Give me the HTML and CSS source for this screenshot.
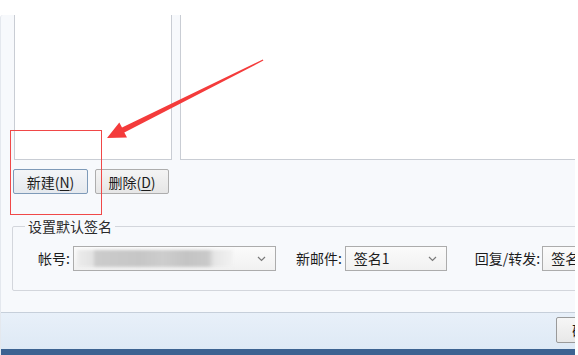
FILE: index.html
```html
<!DOCTYPE html>
<html lang="zh-CN">
<head>
<meta charset="utf-8">
<title>签名设置</title>
<link rel="stylesheet" href="styles.css">
</head>
<body>
<div class="stage">
  <div class="window">
    <div class="lists">
      <div class="list list-left"></div>
      <div class="list list-right"></div>
    </div>
    <div class="buttons">
      <button class="btn btn-default">新建(<u>N</u>)</button>
      <button class="btn btn-second">删除(<u>D</u>)</button>
    </div>
    <fieldset class="group">
      <legend class="group-title">设置默认签名</legend>
      <div class="group-row">
        <span class="label">帐号:</span>
        <div class="combo combo-account">
          <div class="blur"></div>
          <svg class="chev" width="9" height="6" viewBox="0 0 9 6"><path d="M1 1 L4.5 4.5 L8 1" fill="none" stroke="#7a7a7a" stroke-width="1.2"/></svg>
        </div>
        <span class="label label-new">新邮件:</span>
        <div class="combo combo-new">
          <span class="combo-text">签名1</span>
          <svg class="chev" width="9" height="6" viewBox="0 0 9 6"><path d="M1 1 L4.5 4.5 L8 1" fill="none" stroke="#7a7a7a" stroke-width="1.2"/></svg>
        </div>
        <span class="label label-reply">回复/转发:</span>
        <div class="combo combo-reply">
          <span class="combo-text">签名1</span>
        </div>
      </div>
    </fieldset>
    <div class="bar">
      <button class="btn bar-btn">确定</button>
    </div>
    <div class="bar-edge"></div>
  </div>
  <div class="red-box"></div>
  <svg class="arrow" width="578" height="355" viewBox="0 0 578 355">
    <polygon fill="#f43b3b" points="107,138 119.3,122.6 122,127.6 262.8,59.4 263.4,60.6 124.3,132.4 127,137.4"/>
  </svg>
</div>
</body>
</html>
```

FILE: styles.css
```css
* { box-sizing: border-box; }
html, body {
  margin: 0;
  padding: 0;
  background: #ffffff;
}
body {
  width: 578px;
  height: 355px;
  overflow: hidden;
  font-family: "Noto Sans CJK SC", "Noto Sans", sans-serif;
  font-size: 14px;
  color: #1c1c1c;
}
.stage {
  position: relative;
  width: 578px;
  height: 355px;
  padding-top: 15px;
}
.window {
  width: 575px;
  height: 340px;
  background: #f7f9fc;
  border-left: 1px solid #e4e8ee;
  border-top-left-radius: 3px;
  overflow: hidden;
  display: flex;
  flex-direction: column;
}
.lists {
  display: flex;
  height: 145px;
  flex: none;
}
.list {
  background: #ffffff;
  border: 1px solid #c9cdd4;
  border-top: none;
}
.list-left {
  margin-left: 13px;
  width: 158px;
}
.list-right {
  margin-left: 8px;
  flex: 1;
  border-right: none;
}
.buttons {
  display: flex;
  gap: 7px;
  margin-top: 9px;
  margin-left: 12px;
  flex: none;
}
.btn {
  font-family: "Noto Sans CJK SC", "Noto Sans", sans-serif;
  font-size: 14px;
  color: #1c1c1c;
  height: 25px;
  padding: 0;
  line-height: 22px;
  background: linear-gradient(#f4f4f4, #e6e6e6);
  border: 1px solid #adadad;
  border-radius: 2px;
}
.btn u { text-decoration: underline; text-underline-offset: 2px; }
.btn-default {
  width: 75px;
  border-color: #7e9ab8;
  background: linear-gradient(#f3f5f8, #e5e9ee);
}
.btn-second { width: 74px; }
.group {
  margin: 23px 0 0 11px;
  padding: 0 0 19px 25px;
  width: 620px;
  border: 1px solid #d3d6dc;
  border-radius: 2px;
  flex: none;
}
.group-title {
  margin-left: -13px;
  padding: 0 3px;
  line-height: 18px;
  height: 18px;
  color: #2a2a2a;
}
.group-row {
  display: flex;
  align-items: center;
  margin-top: 11px;
  height: 25px;
}
.label {
  line-height: 25px;
  white-space: nowrap;
}
.combo {
  position: relative;
  height: 25px;
  margin-left: 3px;
  border: 1px solid #acacac;
  background: linear-gradient(#fbfbfb, #f1f1f1);
  display: flex;
  align-items: center;
}
.combo-account { width: 203px; }
.combo-new { width: 102px; padding-left: 8px; }
.combo-reply { width: 90px; padding-left: 8px; margin-left: 2px; }
.label-new { margin-left: 20px; }
.label-reply { margin-left: 28px; }
.combo-text { line-height: 23px; }
.chev {
  position: absolute;
  right: 9px;
  top: 9px;
}
.blur {
  margin-left: 3px;
  width: 156px;
  height: 17px;
  background: linear-gradient(90deg, #ececec 0, #e2e2e2 10%, #cbcbcb 12%, #c6c6c6 40%, #cdcdcd 55%, #c4c4c4 70%, #c9c9c9 84%, #e6e6e6 88%, #f2f2f2 100%);
  filter: blur(1.5px);
}
.bar {
  margin-top: 21px;
  height: 37px;
  flex: none;
  border-top: 1px solid #c6cfda;
  background: linear-gradient(#e8f0f9, #dee9f5);
  padding-top: 4px;
}
.bar-btn {
  margin-left: 555px;
  width: 75px;
  height: 26px;
  background: linear-gradient(#f6f6f6, #e8e8e8);
  border-color: #9a9a9a;
  text-align: left;
  padding-left: 15px;
}
.bar-edge {
  height: 6px;
  flex: none;
  background: #3c6291;
}
.red-box {
  position: absolute;
  left: 10px;
  top: 130px;
  width: 92px;
  height: 85px;
  border: 1px solid #f04848;
}
.arrow {
  position: absolute;
  left: 0;
  top: 0;
}
```
